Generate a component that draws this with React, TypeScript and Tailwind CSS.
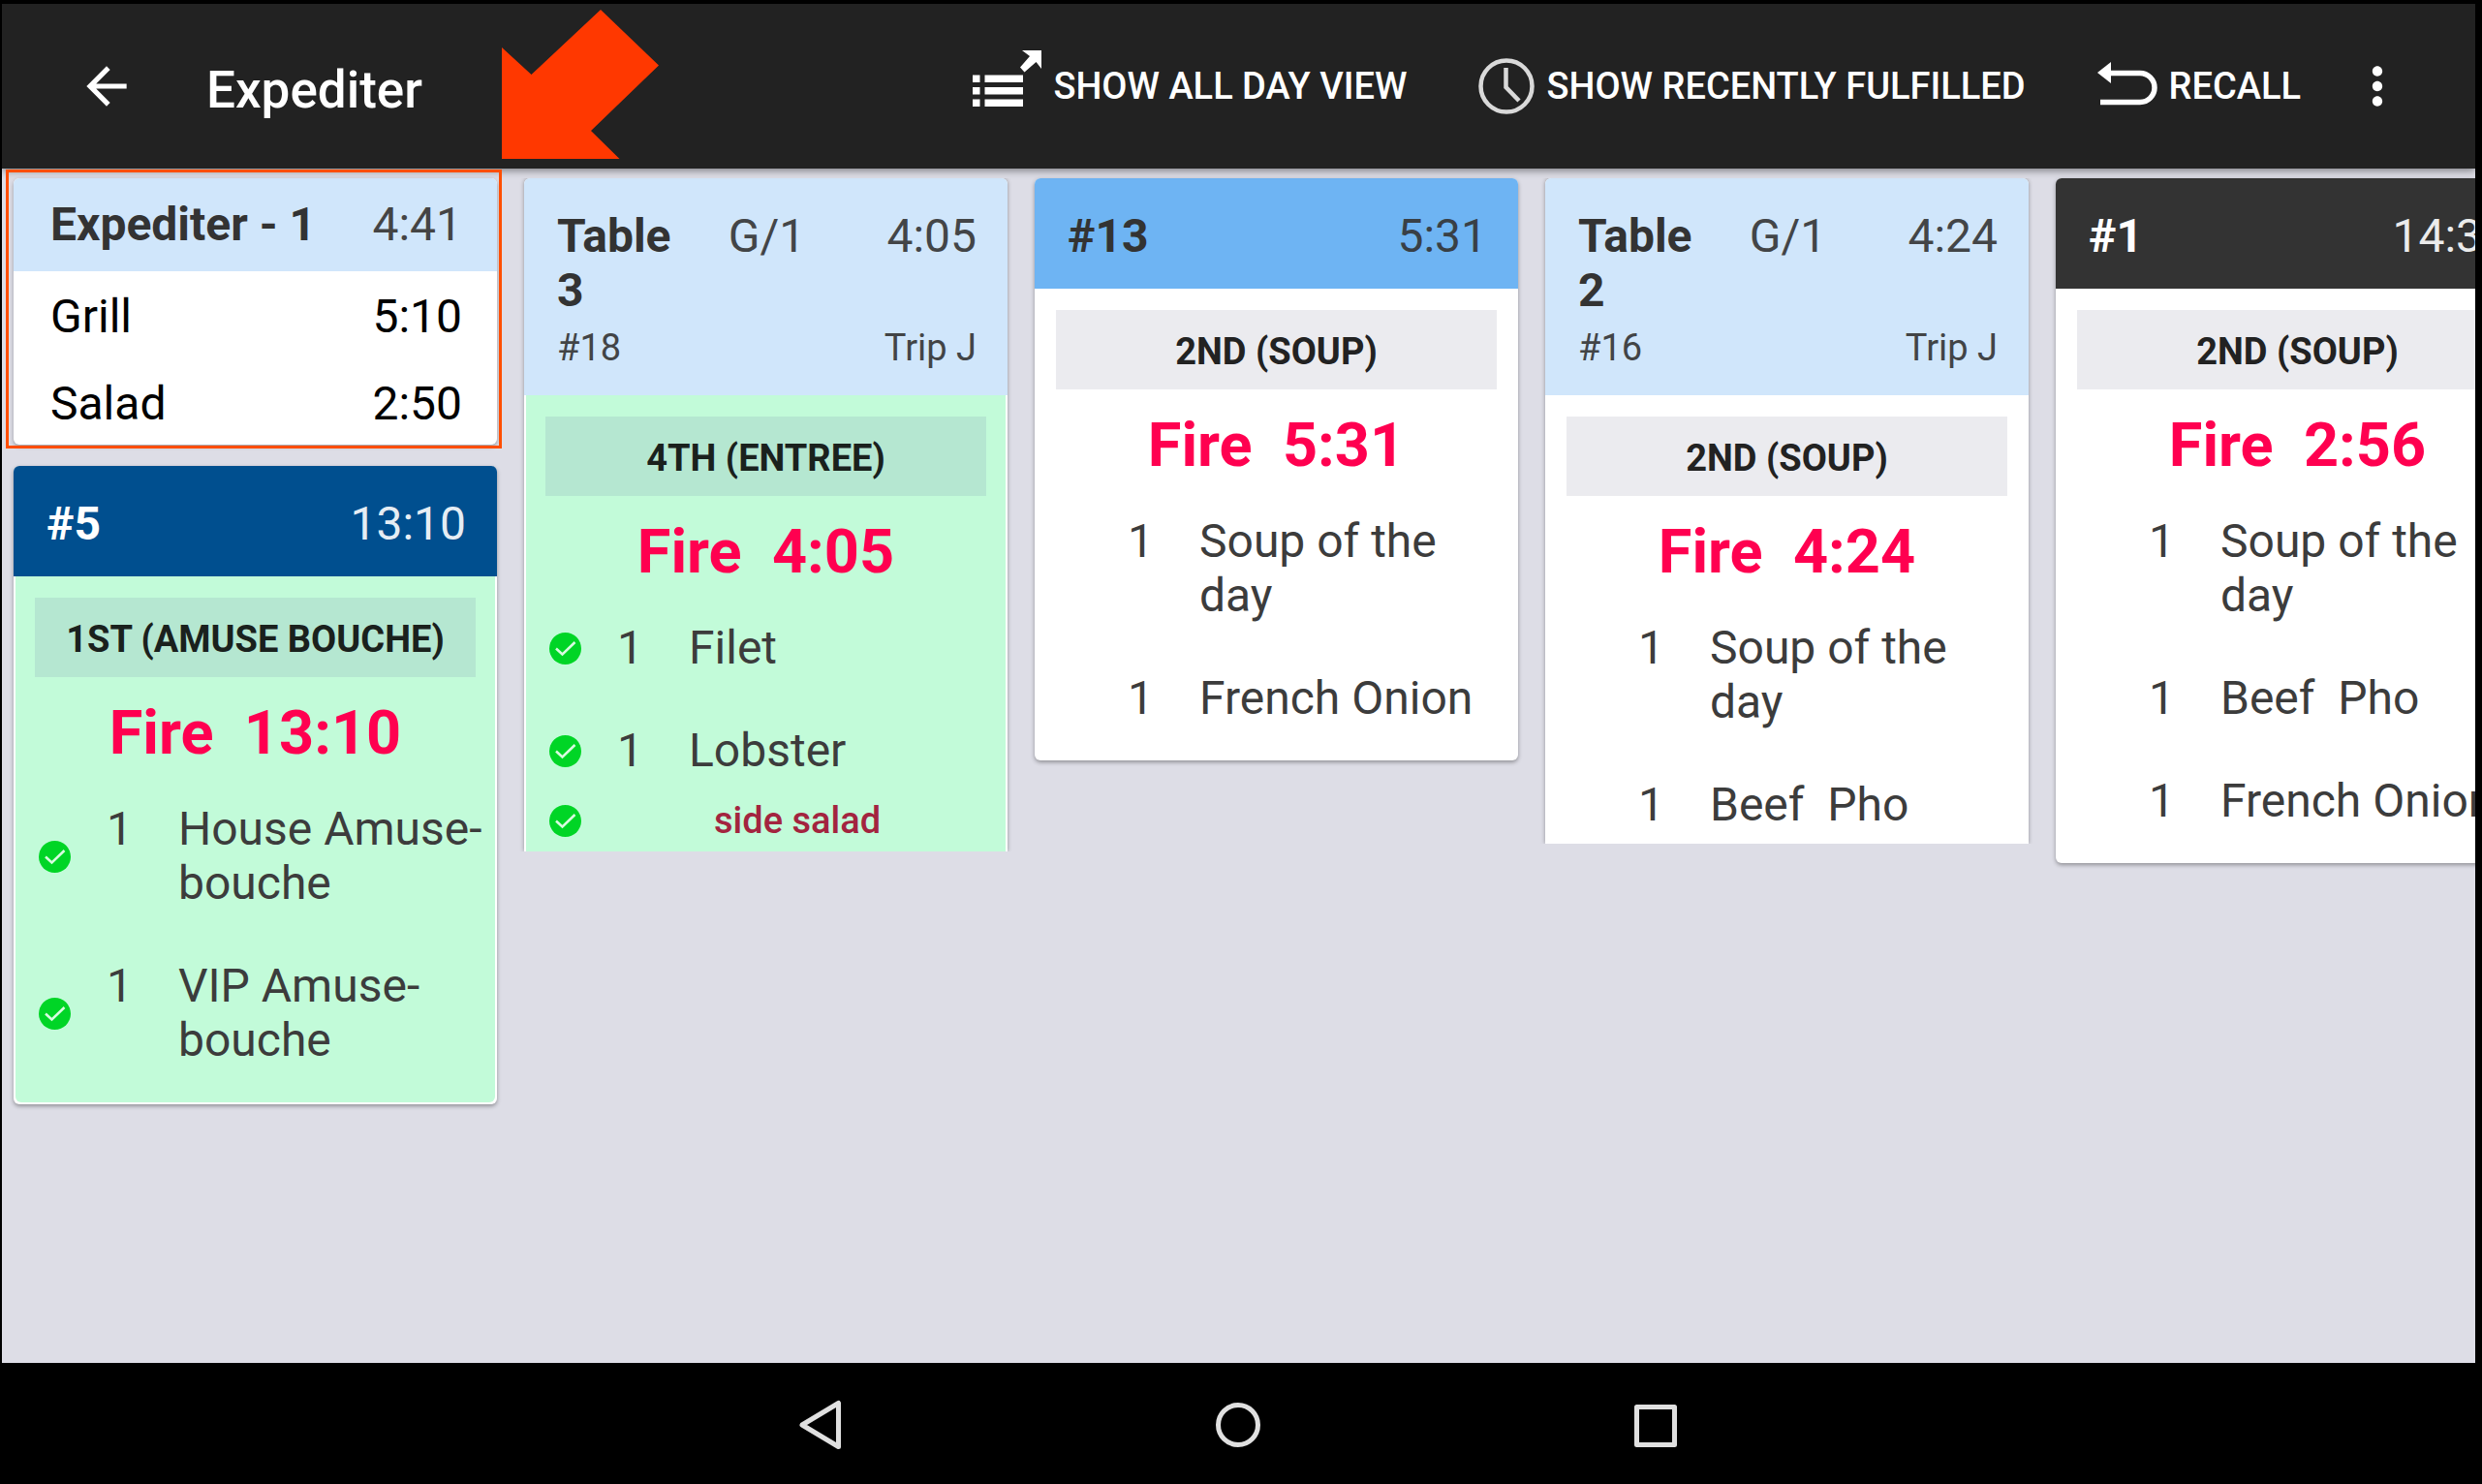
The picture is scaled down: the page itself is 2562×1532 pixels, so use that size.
import { ReactNode } from 'react';
import { MdArrowBack, MdMoreVert } from 'react-icons/md';

type Item = {
  name: string;
  done?: boolean;
  mods?: string[];
};

type Ticket = {
  title: string;
  time: string;
  guests?: string;
  order?: string;
  server?: string;
  course: string;
  fire: string;
  headerClass: string;
  ready?: boolean;
  // the ticket continues below the fold
  cut?: boolean;
  items: Item[];
};

const firstTicket: Ticket = {
  title: '#5',
  time: '13:10',
  course: '1ST (AMUSE BOUCHE)',
  fire: '13:10',
  headerClass: 'bg-[#004f8f] text-white',
  ready: true,
  items: [
    { name: 'House Amuse-bouche', done: true },
    { name: 'VIP Amuse-bouche', done: true },
  ],
};

const tickets: Ticket[] = [
  {
    title: 'Table 3',
    guests: 'G/1',
    time: '4:05',
    order: '#18',
    server: 'Trip J',
    course: '4TH (ENTREE)',
    fire: '4:05',
    headerClass: 'bg-[#d0e6fb] text-[#333333]',
    ready: true,
    cut: true,
    items: [
      { name: 'Filet', done: true },
      { name: 'Lobster', done: true, mods: ['side salad'] },
    ],
  },
  {
    title: '#13',
    time: '5:31',
    course: '2ND (SOUP)',
    fire: '5:31',
    headerClass: 'bg-[#6eb4f3] text-[#333333]',
    items: [{ name: 'Soup of the day' }, { name: 'French Onion' }],
  },
  {
    title: 'Table 2',
    guests: 'G/1',
    time: '4:24',
    order: '#16',
    server: 'Trip J',
    course: '2ND (SOUP)',
    fire: '4:24',
    headerClass: 'bg-[#d0e6fb] text-[#333333]',
    cut: true,
    items: [{ name: 'Soup of the day' }, { name: 'Beef  Pho' }],
  },
  {
    title: '#1',
    time: '14:36',
    course: '2ND (SOUP)',
    fire: '2:56',
    headerClass: 'bg-[#333333] text-white',
    items: [{ name: 'Soup of the day' }, { name: 'Beef  Pho' }, { name: 'French Onion' }],
  },
];

const stations = [
  { name: 'Grill', time: '5:10' },
  { name: 'Salad', time: '2:50' },
];

function ListIcon() {
  return (
    <svg className="w-[71px] h-[74px]" viewBox="0 0 71 74" fill="#fff" aria-hidden="true">
      <path d="M0 25.500h7.500v7.500H0zM12.500 25.500H52v7.500H12.500zM0 38h7.500v7.500H0zM12.500 38H52v7.500H12.500zM0 50.500h7.500V58H0zM12.500 50.500H52V58H12.500z" />
      <path d="M51 0h20v19l-5.500-7-12 10.500-4.500-5L59 6z" />
    </svg>
  );
}

function ClockIcon() {
  return (
    <svg className="w-[58px] h-[58px]" viewBox="0 0 58 58" fill="none" stroke="#d9d9d9" strokeWidth="4.5" aria-hidden="true">
      <circle cx="29" cy="29" r="26.5" />
      <path d="M28.5 10v20l13.5 14" />
    </svg>
  );
}

function RecallIcon() {
  return (
    <svg className="w-[62px] h-[50px]" viewBox="0 0 62 50" aria-hidden="true">
      <path d="M0 11L14 0v22z" fill="#fff" />
      <path d="M10 11.500h34a15 15 0 0 1 0 30H3" fill="none" stroke="#fff" strokeWidth="5.5" />
    </svg>
  );
}

function CheckIcon() {
  return (
    <svg className="w-[33px] h-[33px]" viewBox="0 0 33 33" role="img" aria-label="Fulfilled">
      <circle cx="16.5" cy="16.5" r="16.5" fill="#00d526" />
      <path d="M7 16.5l6.5 6L26.5 10" fill="none" stroke="#d8fbe0" strokeWidth="2.5" />
    </svg>
  );
}

function ActionButton({ icon, children }: { icon: ReactNode; children: ReactNode }) {
  return (
    <button type="button" className="flex items-center gap-3 text-[38px] leading-[46px] font-medium whitespace-nowrap">
      {icon}
      {children}
    </button>
  );
}

function TopBar() {
  return (
    <header className="relative z-10 flex items-center h-[170px] pl-[77px] pr-[70px] bg-[#222222] text-white shadow-[0_2px_8px_rgba(0,0,0,0.45)]">
      <button type="button" aria-label="Back">
        <MdArrowBack className="w-[62px] h-[62px]" />
      </button>
      <h1 className="ml-[72px] mt-2 text-[53px] leading-[64px] font-medium">Expediter</h1>
      <div className="ml-auto flex items-center gap-[74px]">
        <ActionButton icon={<ListIcon />}>SHOW ALL DAY VIEW</ActionButton>
        <ActionButton icon={<ClockIcon />}>SHOW RECENTLY FULFILLED</ActionButton>
        <ActionButton icon={<RecallIcon />}>RECALL</ActionButton>
      </div>
      <button type="button" aria-label="More options" className="ml-12">
        <MdMoreVert className="w-[62px] h-[62px]" />
      </button>
    </header>
  );
}

function StationSummary() {
  return (
    <section className="relative">
      <div className="rounded-md overflow-hidden bg-white text-[48px] leading-[56px] shadow-[0_2px_4px_rgba(0,0,0,0.3)]">
        <div className="flex justify-between pl-[38px] pr-9 py-5 bg-[#d0e6fb] text-[#333333]">
          <h2 className="font-bold">Expediter - 1</h2>
          <span className="text-[#444444]">4:41</span>
        </div>
        <ul className="pt-[2px] text-black">
          {stations.map((station) => (
            <li key={station.name} className="flex justify-between pl-[38px] pr-9 py-[17px] last:pb-[14px]">
              <span>{station.name}</span>
              <span>{station.time}</span>
            </li>
          ))}
        </ul>
      </div>

      {/* Callout */}
      <div className="absolute z-20 -top-[9px] -bottom-1 -left-2 -right-[5px] border-3 border-[#ff4e00] pointer-events-none">
        <svg
          className="absolute left-full bottom-full ml-[3px] mb-[14px] w-[162px] h-[154px]"
          viewBox="0 0 162 154"
          aria-hidden="true"
        >
          <path d="M0 39l30.5 28L102 0l60 57.5L92 125l29.5 29H0z" fill="#ff3800" />
        </svg>
      </div>
    </section>
  );
}

function TicketCard({ ticket }: { ticket: Ticket }) {
  return (
    <article
      className={`overflow-hidden bg-white ${
        ticket.cut
          ? 'rounded-t-md shadow-[0_0_4px_rgba(0,0,0,0.35)] [clip-path:inset(0_-8px)]'
          : 'rounded-md shadow-[0_2px_4px_rgba(0,0,0,0.35)]'
      }`}
    >
      <header className={`pl-[34px] pr-8 pt-8 pb-[26px] text-[48px] leading-[56px] ${ticket.headerClass}`}>
        <div className="grid grid-cols-3">
          <h2 className="font-bold">{ticket.title}</h2>
          <span className="text-center opacity-90">{ticket.guests}</span>
          <span className="text-right opacity-90">{ticket.time}</span>
        </div>
        {ticket.order && (
          <div className="flex justify-between mt-2 text-[38px] leading-[46px] opacity-90">
            <span>{ticket.order}</span>
            <span>{ticket.server}</span>
          </div>
        )}
      </header>

      <div className={ticket.ready ? `mx-[2px] bg-[#c2fbd9] ${ticket.cut ? '' : 'mb-[2px] rounded-b-md'}` : 'mx-[2px]'}>
        <div className="px-5 pt-[22px]">
          <h3
            className={`pt-5 pb-4 text-center text-[38px] leading-[46px] font-bold ${
              ticket.ready ? 'bg-[#b5e7d1] text-[#1a211d]' : 'bg-[#ebebef] text-[#222222]'
            }`}
          >
            {ticket.course}
          </h3>
        </div>
        <p className="pt-[21px] text-center text-[63px] leading-[74px] font-bold text-[#ff0050] whitespace-pre">
          {`Fire  ${ticket.fire}`}
        </p>
        <ul className={`flex flex-col gap-[50px] pt-[34px] ${ticket.cut ? 'pb-3' : 'pb-9'}`}>
          {ticket.items.map((item) => (
            <li key={item.name}>
              <div className="flex items-center pl-6 pr-2 text-[48px] leading-[56px] text-[#3c3c3c]">
                <span className="w-[70px] shrink-0">{item.done && <CheckIcon />}</span>
                <span className="w-[74px] shrink-0 self-start">1</span>
                <span className="whitespace-pre-wrap">{item.name}</span>
              </div>
              {item.mods?.map((mod) => (
                <div key={mod} className="flex items-center mt-6 pl-6 text-[38px] leading-[40px] text-[#a3243f]">
                  <span className="w-[170px] shrink-0">{item.done && <CheckIcon />}</span>
                  <span className="font-medium">{mod}</span>
                </div>
              ))}
            </li>
          ))}
        </ul>
      </div>
    </article>
  );
}

function SystemNav() {
  return (
    <nav className="flex items-center justify-center h-[125px] mr-[6px] gap-[375px] bg-black">
      <button type="button" aria-label="Back">
        <svg className="w-14 h-14" viewBox="0 0 56 56" fill="none" stroke="#e0e0e0" strokeWidth="5" strokeLinejoin="round">
          <path d="M9 29L46.500 6.500v45z" />
        </svg>
      </button>
      <button type="button" aria-label="Home">
        <svg className="w-14 h-14" viewBox="0 0 56 56" fill="none" stroke="#e0e0e0" strokeWidth="5">
          <circle cx="28" cy="29" r="20.500" />
        </svg>
      </button>
      <button type="button" aria-label="Overview">
        <svg className="w-14 h-14" viewBox="0 0 56 56" fill="none" stroke="#e0e0e0" strokeWidth="5" strokeLinejoin="round">
          <rect x="8.500" y="10.500" width="39" height="39" />
        </svg>
      </button>
    </nav>
  );
}

export default function App() {
  return (
    <div className="min-h-screen flex flex-col pt-1 bg-black font-[Roboto,sans-serif]">
      <div className="flex-1 flex flex-col ml-[2px] mr-[7px]">
        <TopBar />
        <main className="flex-1 flex items-start gap-7 pt-[10px] pb-8 pl-3 bg-[#dddde6] overflow-x-clip">
          <div className="w-[499px] shrink-0 flex flex-col gap-[22px]">
            <StationSummary />
            <TicketCard ticket={firstTicket} />
          </div>
          {tickets.map((ticket) => (
            <div key={ticket.title} className="w-[499px] shrink-0">
              <TicketCard ticket={ticket} />
            </div>
          ))}
        </main>
      </div>
      <SystemNav />
    </div>
  );
}
